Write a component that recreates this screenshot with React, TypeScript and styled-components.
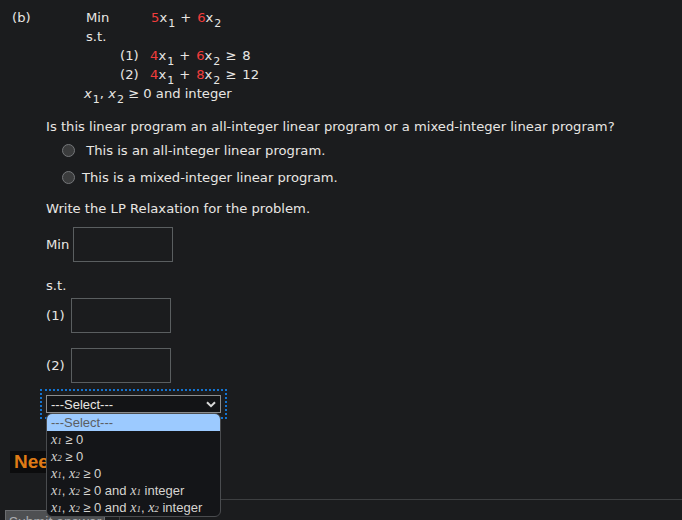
import React from "react";
import styled, { createGlobalStyle } from "styled-components";

const GlobalStyle = createGlobalStyle`
  body {
    margin: 0;
    background: #1b1c1e;
    color: #e8e6e3;
    font-family: "DejaVu Sans", Verdana, sans-serif;
    font-size: 13.15px;
  }
`;

const Page = styled.div`
  position: relative;
  height: 520px;
  overflow: hidden;
`;

const Problem = styled.div`
  display: flex;
  padding: 8px 0 0 12px;
  line-height: 19px;
`;

const PartLabel = styled.div`
  width: 74px;
`;

const Formulation = styled.div`
  display: flex;
  flex-direction: column;
`;

const Row = styled.div<{ $indent?: number }>`
  display: flex;
  height: 19px;
  margin-left: ${(p) => p.$indent ?? 0}px;
`;

const Cell = styled.span<{ $w: number }>`
  width: ${(p) => p.$w}px;
`;

const Coef = styled.span`
  color: #f23c3c;
`;

const Var = styled.span<{ $italic?: boolean }>`
  font-style: ${(p) => (p.$italic ? "italic" : "normal")};
`;

const Sub = styled.sub`
  font-size: 11px;
  line-height: 0;
  vertical-align: -5px;
  margin-left: 1px;
`;

const Op = styled.span`
  margin: 0 6px 0 5px;
`;

const Section = styled.div`
  padding-left: 46px;
`;

const Question = styled.p`
  margin: 14px 0 0;
  line-height: 19px;
`;

const RadioList = styled.div`
  margin: 1px 0 0 16px;
  display: flex;
  flex-direction: column;
`;

const RadioRow = styled.label`
  display: flex;
  align-items: center;
  height: 27px;
  gap: 7px;
`;

const RadioDot = styled.span`
  width: 11px;
  height: 11px;
  border-radius: 50%;
  background: #3b3c3d;
  border: 1px solid #75777a;
`;

const Prompt = styled.p`
  margin: 8px 0 0;
  line-height: 19px;
`;

const FieldRow = styled.div<{ $top: number; $gap: number }>`
  display: flex;
  align-items: center;
  gap: ${(p) => p.$gap}px;
  margin-top: ${(p) => p.$top}px;
`;

const Field = styled.div`
  width: 98px;
  height: 33px;
  border: 1px solid #5a5e60;
`;

const StLabel = styled.div`
  margin-top: 14px;
  line-height: 19px;
`;

const SelectWrap = styled.div`
  position: relative;
  margin-top: 12px;
  width: 175px;
  outline: 2px dotted #1473d0;
  outline-offset: 4px;
`;

const SelectBox = styled.div`
  box-sizing: border-box;
  height: 18px;
  border: 1px solid #8a8c8e;
  background: #131416;
  display: flex;
  align-items: center;
  justify-content: space-between;
  padding: 0 4px 0 4px;
  font-family: "Liberation Sans", Arial, sans-serif;
  font-size: 13px;
  color: #e8e6e3;
`;

const OptionList = styled.div`
  position: absolute;
  top: 100%;
  left: 0;
  width: 175px;
  box-sizing: border-box;
  border: 1px solid #4a4c4f;
  border-radius: 6px;
  background: #141518;
  overflow: hidden;
  z-index: 2;
  font-family: "Liberation Sans", Arial, sans-serif;
  font-size: 13px;
`;

const Option = styled.div<{ $active?: boolean }>`
  height: 17px;
  line-height: 17px;
  padding-left: 4px;
  background: ${(p) => (p.$active ? "#9ccaff" : "transparent")};
  color: ${(p) => (p.$active ? "#5b5e63" : "#d6d4d0")};
  white-space: nowrap;
`;

const X = styled.i`
  font-family: "Liberation Serif", "Times New Roman", serif;
  font-size: 14px;
`;

const XSub = styled.span`
  font-family: "Liberation Serif", serif;
  font-style: italic;
  font-size: 9px;
`;

const Help = styled.div`
  margin: 38px 0 0 10px;
  display: inline-block;
  background: #0c0c0d;
  padding: 0 4px;
  height: 22px;
  line-height: 22px;
  font-family: "Liberation Sans", Arial, sans-serif;
  font-weight: bold;
  font-size: 19px;
  color: #df7b16;
`;

const Rule = styled.div`
  margin: 26px 0 0 120px;
  border-top: 1px solid #3d3f41;
`;

const Footer = styled.div`
  display: flex;
`;

const SubmitButton = styled.button`
  margin: 10px 0 0 5px;
  width: 100px;
  height: 24px;
  background: #4e5052;
  border: 1px solid #6b6d70;
  color: #a9abad;
  font-family: "Liberation Sans", Arial, sans-serif;
  font-size: 14px;
  padding: 0;
`;

const Divider = styled.div`
  margin: 11px 0 0 14px;
  border-left: 1px solid #3d3f41;
  height: 20px;
`;

const x = (n: number) => (
  <>
    <Var>x</Var>
    <Sub>{n}</Sub>
  </>
);

const ix = (n: number) => (
  <>
    <X>x</X>
    <XSub>{n === 1 ? "1" : "2"}</XSub>
  </>
);

const options = [
  <>{ix(1)} ≥ 0</>,
  <>{ix(2)} ≥ 0</>,
  <>{ix(1)}, {ix(2)} ≥ 0</>,
  <>{ix(1)}, {ix(2)} ≥ 0 and {ix(1)} integer</>,
  <>{ix(1)}, {ix(2)} ≥ 0 and {ix(1)}, {ix(2)} integer</>,
];

export default function App() {
  return (
    <Page>
      <GlobalStyle />
      <Problem>
        <PartLabel>(b)</PartLabel>
        <Formulation>
          <Row>
            <Cell $w={65}>Min</Cell>
            <span>
              <Coef>5</Coef>{x(1)}<Op>+</Op><Coef>6</Coef>{x(2)}
            </span>
          </Row>
          <Row>s.t.</Row>
          <Row $indent={34}>
            <Cell $w={30}>(1)</Cell>
            <span>
              <Coef>4</Coef>{x(1)}<Op>+</Op><Coef>6</Coef>{x(2)}<Op>≥</Op>8
            </span>
          </Row>
          <Row $indent={34}>
            <Cell $w={30}>(2)</Cell>
            <span>
              <Coef>4</Coef>{x(1)}<Op>+</Op><Coef>8</Coef>{x(2)}<Op>≥</Op>12
            </span>
          </Row>
          <Row $indent={-2}>
            <span>
              <Var $italic>x</Var><Sub>1</Sub>, <Var $italic>x</Var><Sub>2</Sub> ≥ 0 and integer
            </span>
          </Row>
        </Formulation>
      </Problem>

      <Section>
        <Question>
          Is this linear program an all-integer linear program or a mixed-integer linear program?
        </Question>
        <RadioList>
          <RadioRow>
            <RadioDot />
            <span>&nbsp;This is an all-integer linear program.</span>
          </RadioRow>
          <RadioRow>
            <RadioDot />
            <span>This is a mixed-integer linear program.</span>
          </RadioRow>
        </RadioList>

        <Prompt>Write the LP Relaxation for the problem.</Prompt>

        <FieldRow $top={9} $gap={4}>
          <span>Min</span>
          <Field />
        </FieldRow>
        <StLabel>s.t.</StLabel>
        <FieldRow $top={3} $gap={6}>
          <span>(1)</span>
          <Field />
        </FieldRow>
        <FieldRow $top={15} $gap={6}>
          <span>(2)</span>
          <Field />
        </FieldRow>

        <SelectWrap>
          <SelectBox>
            <span>---Select---</span>
            <svg width="10" height="7" viewBox="0 0 10 7">
              <path d="M1 1.2 L5 5.2 L9 1.2" fill="none" stroke="#d8d8d8" strokeWidth="2" />
            </svg>
          </SelectBox>
          <OptionList>
            <Option $active>---Select---</Option>
            {options.map((o, i) => (
              <Option key={i}>{o}</Option>
            ))}
          </OptionList>
        </SelectWrap>
      </Section>

      <Help>Need Help?</Help>
      <Rule />
      <Footer>
        <SubmitButton>Submit answer</SubmitButton>
        <Divider />
      </Footer>
    </Page>
  );
}
